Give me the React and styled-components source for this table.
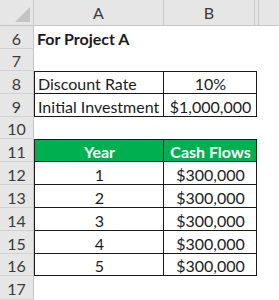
import styled, { createGlobalStyle } from "styled-components";

const GlobalStyle = createGlobalStyle`
  html, body {
    margin: 0;
    padding: 0;
    background: #ffffff;
  }
  body {
    font-family: Lato, "Liberation Sans", sans-serif;
    width: 279px;
    height: 300px;
    overflow: hidden;
  }
`;

const Sheet = styled.div`
  display: flex;
  flex-direction: column;
  width: 279px;
  height: 300px;
  overflow: hidden;
  background: #ffffff;
`;

const HeaderRow = styled.div`
  display: grid;
  grid-template-columns: 34px 130px 91px 4px 1fr;
  height: 26px;
  flex: none;
  background: #e6e6e6;
  border-bottom: 1px solid #c4c4c4;
  box-sizing: border-box;
`;

const HeaderCell = styled.div`
  display: flex;
  align-items: center;
  justify-content: center;
  position: relative;
  border-right: ${(p) => (p.$last ? "none" : "1px solid #c8c8c8")};
  color: #3b3b3b;
  font-size: 16px;
`;

const Corner = styled.svg`
  position: absolute;
  right: 3px;
  bottom: 3px;
`;

const Row = styled.div`
  display: grid;
  grid-template-columns: 34px 130px 93px 1fr;
  flex: none;
`;

const RowHead = styled.div`
  display: flex;
  align-items: center;
  justify-content: center;
  background: #e6e6e6;
  border-right: 1px solid #c4c4c4;
  border-bottom: 1px solid #d2d2d2;
  box-sizing: border-box;
  color: #3b3b3b;
  font-size: 16px;
  padding-top: 2px;
`;

const Cell = styled.div`
  display: flex;
  align-items: center;
  justify-content: ${(p) => (p.$center ? "center" : "flex-start")};
  box-sizing: border-box;
  padding: 2px 2px 0 3px;
  white-space: nowrap;
  overflow: visible;
  font-size: 16px;
  color: #1c1c1c;
  font-weight: ${(p) => (p.$bold ? 700 : 400)};
  background: ${(p) => (p.$head ? "#00b050" : "transparent")};
  ${(p) => p.$head && "color: #ffffff;"}
  ${(p) =>
    p.$boxed &&
    `
    border-right: 1px solid #1a1a1a;
    border-bottom: 1px solid #1a1a1a;
  `}
  ${(p) => p.$boxed && p.$first && "border-left: 1px solid #1a1a1a;"}
  ${(p) => p.$boxed && p.$top && "border-top: 1px solid #1a1a1a;"}
`;

const rows = [
  { n: 6, h: 23, a: "For Project A", bold: true },
  { n: 7, h: 22 },
  { n: 8, h: 23, a: "Discount Rate", b: "10%", boxed: true, top: true },
  { n: 9, h: 23, a: "Initial Investment", b: "$1,000,000", boxed: true },
  { n: 10, h: 22 },
  { n: 11, h: 23, a: "Year", b: "Cash Flows", boxed: true, top: true, head: true },
  { n: 12, h: 23, a: "1", b: "$300,000", boxed: true, center: true },
  { n: 13, h: 23, a: "2", b: "$300,000", boxed: true, center: true },
  { n: 14, h: 23, a: "3", b: "$300,000", boxed: true, center: true },
  { n: 15, h: 23, a: "4", b: "$300,000", boxed: true, center: true },
  { n: 16, h: 22, a: "5", b: "$300,000", boxed: true, center: true },
  { n: 17, h: 24 },
];

export default function App() {
  return (
    <Sheet>
      <GlobalStyle />
      <HeaderRow>
        <HeaderCell>
          <Corner width="15" height="15" viewBox="0 0 15 15">
            <polygon points="15,0 15,15 0,15" fill="#c4c4c4" />
          </Corner>
        </HeaderCell>
        <HeaderCell>A</HeaderCell>
        <HeaderCell>B</HeaderCell>
        <HeaderCell />
        <HeaderCell $last />
      </HeaderRow>
      {rows.map((r) => (
        <Row key={r.n} style={{ height: r.h }}>
          <RowHead>{r.n}</RowHead>
          <Cell
            $boxed={r.boxed}
            $first
            $top={r.top}
            $head={r.head}
            $bold={r.bold || r.head}
            $center={r.center || r.head}
          >
            {r.a}
          </Cell>
          <Cell
            $boxed={r.boxed}
            $top={r.top}
            $head={r.head}
            $bold={r.head}
            $center
          >
            {r.b}
          </Cell>
          <Cell />
        </Row>
      ))}
    </Sheet>
  );
}
